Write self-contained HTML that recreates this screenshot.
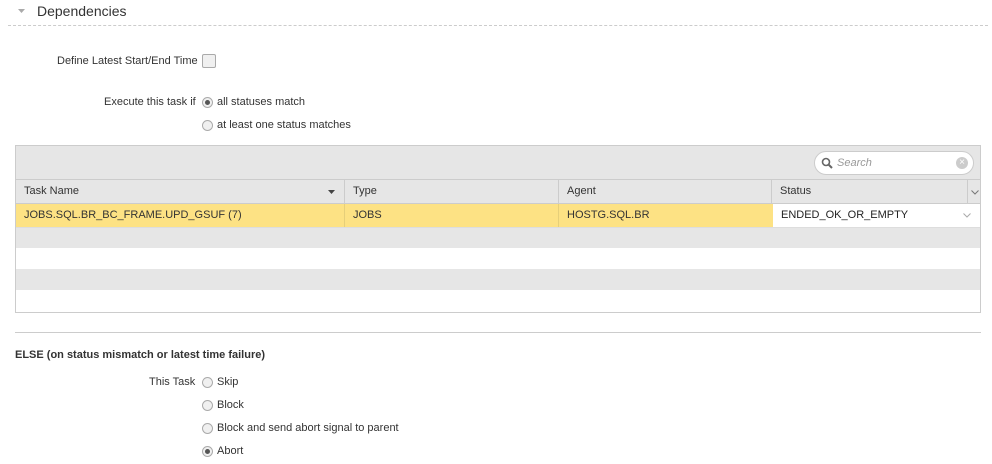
<!DOCTYPE html>
<html><head><style>
body{margin:0;width:992px;height:464px;background:#fff;font-family:"Liberation Sans",sans-serif;font-size:11px;color:#333;position:relative;overflow:hidden}
.a{position:absolute;white-space:nowrap}
.rad{position:absolute;width:9px;height:9px;border:1px solid #aaa;border-radius:50%;background:#f0f0f0}
.rad.on::after{content:"";position:absolute;left:2px;top:2px;width:5px;height:5px;border-radius:50%;background:#555}
.cell{position:absolute;top:0;height:100%;line-height:23px;padding-left:8px;box-sizing:border-box}
</style></head><body>
<svg class="a" style="left:18px;top:9px" width="7" height="5"><path d="M0 0L7 0L3.5 4Z" fill="#aaa"/></svg>
<div class="a" style="left:37px;top:3px;font-size:14px;color:#333">Dependencies</div>
<div class="a" style="left:8px;top:25px;width:980px;border-top:1px dashed #ccc"></div>
<div class="a" style="left:57px;top:55px">Define Latest Start/End Time</div>
<div class="a" style="left:202px;top:54px;width:12px;height:12px;border:1px solid #aaa;border-radius:2px;background:#f0f0f0"></div>
<div class="a" style="left:104px;top:96px">Execute this task if</div>
<div class="rad on" style="left:202px;top:97px"></div><div class="a" style="left:217px;top:96px">all statuses match</div>
<div class="rad" style="left:202px;top:120px"></div><div class="a" style="left:217px;top:119px">at least one status matches</div>

<div class="a" style="left:15px;top:145px;width:964px;height:166px;border:1px solid #ccc;background:#fff">
 <div class="a" style="left:0;top:0;width:964px;height:33px;background:#e6e6e6;border-bottom:1px solid #ccc"></div>
 <div class="a" style="left:798px;top:5px;width:158px;height:22px;border:1px solid #ccc;border-radius:12px;background:#fff">
  <svg class="a" style="left:6px;top:5px" width="12" height="12"><circle cx="5" cy="5" r="3.5" stroke="#666" stroke-width="1.6" fill="none"/><line x1="7.5" y1="7.5" x2="11" y2="11" stroke="#666" stroke-width="2"/></svg>
  <div class="a" style="left:22px;top:5px;font-style:italic;color:#999">Search</div>
  <div class="a" style="left:141px;top:5px;width:12px;height:12px;border-radius:50%;background:#ccc;color:#fff;font-size:10px;line-height:12px;text-align:center">×</div>
 </div>
 <div class="a" style="left:0;top:34px;width:964px;height:23px;background:#e6e6e6;border-bottom:1px solid #ccc">
  <div class="cell" style="left:0;width:329px;border-right:1px solid #ccc">Task Name<svg style="position:absolute;right:9px;top:10px" width="7" height="4"><path d="M0 0L7 0L3.5 4Z" fill="#444"/></svg></div>
  <div class="cell" style="left:329px;width:214px;border-right:1px solid #ccc">Type</div>
  <div class="cell" style="left:543px;width:213px;border-right:1px solid #ccc">Agent</div>
  <div class="cell" style="left:756px;width:196px;border-right:1px solid #ccc">Status</div>
  <svg class="a" style="left:955px;top:10px" width="8" height="5"><path d="M0.5 0.5L4 4L7.5 0.5" stroke="#777" fill="none"/></svg>
 </div>
 <div class="a" style="left:0;top:58px;width:964px;height:23px;background:#fde284;border-bottom:1px solid #ddd">
  <div class="cell" style="left:0;width:329px;border-right:1px solid #e6cf7a">JOBS.SQL.BR_BC_FRAME.UPD_GSUF (7)</div>
  <div class="cell" style="left:329px;width:214px;border-right:1px solid #e6cf7a">JOBS</div>
  <div class="cell" style="left:543px;width:214px">HOSTG.SQL.BR</div>
  <div class="cell" style="left:757px;width:207px;background:#fff;color:#222">ENDED_OK_OR_EMPTY<svg style="position:absolute;right:9px;top:9px" width="8" height="5"><path d="M0.5 0.5L4 4L7.5 0.5" stroke="#aaa" fill="none"/></svg></div>
 </div>
 <div class="a" style="left:0;top:82px;width:964px;height:20px;background:#e6e6e6"></div>
 <div class="a" style="left:0;top:123px;width:964px;height:21px;background:#e6e6e6"></div>
</div>

<div class="a" style="left:15px;top:332px;width:966px;border-top:1px solid #ccc"></div>
<div class="a" style="left:15px;top:349px;font-weight:bold">ELSE (on status mismatch or latest time failure)</div>
<div class="a" style="left:149px;top:376px">This Task</div>
<div class="rad" style="left:202px;top:377px"></div><div class="a" style="left:217px;top:376px">Skip</div>
<div class="rad" style="left:202px;top:400px"></div><div class="a" style="left:217px;top:399px">Block</div>
<div class="rad" style="left:202px;top:423px"></div><div class="a" style="left:217px;top:422px">Block and send abort signal to parent</div>
<div class="rad on" style="left:202px;top:446px"></div><div class="a" style="left:217px;top:445px">Abort</div>
</body></html>
